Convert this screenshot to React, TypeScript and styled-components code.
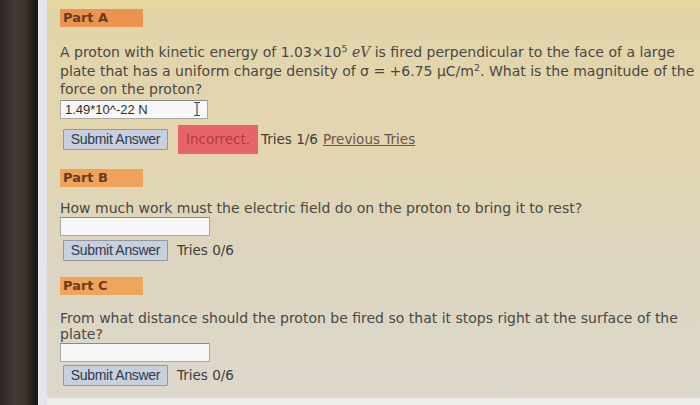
import React from 'react';
import styled, { createGlobalStyle } from 'styled-components';

const GlobalStyle = createGlobalStyle`
  html, body {
    margin: 0;
    padding: 0;
    width: 700px;
    height: 405px;
    overflow: hidden;
    background: #2e2725;
  }
`;

const Screen = styled.div`
  display: flex;
  width: 700px;
  height: 405px;
  overflow: hidden;
`;

const Bezel = styled.div`
  width: 33px;
  flex-shrink: 0;
  background: linear-gradient(90deg, #2b2422 0%, #463b36 45%, #3a302c 80%, #231d1c 100%);
`;

const Rim = styled.div`
  width: 14px;
  flex-shrink: 0;
  background: linear-gradient(90deg, #1c1818 0, #1c1818 5px, #e9e7ee 5px, #e4e2e8 100%);
`;

const Page = styled.div`
  flex: 1;
  display: flex;
  flex-direction: column;
  background: linear-gradient(180deg, #e6d79c 0, #e6d79c 7px, #e3d5aa 8px, #e2d5b0 38%, #ddd5bf 62%, #dcd8cb 100%);
  min-width: 0;
`;

const Content = styled.div`
  flex: 1;
  padding: 9px 0 0 13px;
  white-space: nowrap;
  overflow: hidden;
`;

const BottomStrip = styled.div`
  height: 7px;
  flex-shrink: 0;
  background: #eeedea;
`;

const Section = styled.div<{ $gap: number }>`
  display: flex;
  flex-direction: column;
  align-items: flex-start;
  margin-top: ${p => p.$gap}px;
`;

const PartLabel = styled.div<{ $tone: string }>`
  width: 80px;
  height: 18px;
  padding-left: 3px;
  background: ${p => p.$tone};
  color: #6a3b1f;
  font-family: "DejaVu Sans", Verdana, sans-serif;
  font-weight: bold;
  font-size: 13px;
  line-height: 18px;
`;

const Question = styled.p<{ $gap: number; $lh: number }>`
  margin: ${p => p.$gap}px 0 0 0;
  font-family: "DejaVu Sans", Verdana, sans-serif;
  font-size: 14px;
  line-height: ${p => p.$lh}px;
  color: #4a4846;
  white-space: nowrap;
`;

const Sup = styled.sup`
  font-size: 9.5px;
  line-height: 0;
  vertical-align: 5px;
`;

const Var = styled.span`
  font-family: "DejaVu Serif", "Liberation Serif", serif;
  font-style: italic;
`;

const InputWrap = styled.div<{ $gap: number }>`
  position: relative;
  margin-top: ${p => p.$gap}px;
`;

const AnswerBox = styled.div<{ $w: number }>`
  box-sizing: border-box;
  width: ${p => p.$w}px;
  height: 19px;
  background: #f7f7f8;
  border: 1px solid #a9a7a4;
  border-top-color: #8d8b89;
  font-family: "Liberation Sans", Arial, sans-serif;
  font-size: 13px;
  line-height: 17px;
  padding-left: 4px;
  color: #2f2f33;
`;

const Caret = styled.svg`
  position: absolute;
  left: 133px;
  top: 1px;
`;

const ActionRow = styled.div<{ $gap: number; $h: number }>`
  display: flex;
  align-items: center;
  height: ${p => p.$h}px;
  margin-top: ${p => p.$gap}px;
`;

const SubmitButton = styled.button`
  box-sizing: border-box;
  width: 105px;
  height: 21px;
  margin-left: 3px;
  padding: 0;
  background: #c7d0dc;
  border: 1px solid #8f98a4;
  border-radius: 1px;
  font-family: "Liberation Sans", Arial, sans-serif;
  font-size: 14px;
  color: #2e3a52;
  letter-spacing: -0.3px;
`;

const Verdict = styled.div`
  width: 80px;
  height: 29px;
  margin-left: 10px;
  background: #e8646b;
  color: #b03b45;
  font-family: "DejaVu Sans", Verdana, sans-serif;
  font-size: 13.5px;
  line-height: 29px;
  text-align: center;
`;

const Tries = styled.span<{ $gap: number }>`
  margin-left: ${p => p.$gap}px;
  font-family: "DejaVu Sans", Verdana, sans-serif;
  font-size: 13.5px;
  color: #3f3d3b;
`;

const PrevLink = styled.a`
  margin-left: 5px;
  font-family: "DejaVu Sans", Verdana, sans-serif;
  font-size: 13.5px;
  color: #6a564c;
  text-decoration: underline;
`;

export default function App() {
  return (
    <>
      <GlobalStyle />
      <Screen>
        <Bezel />
        <Rim />
        <Page>
          <Content>
            <Section $gap={0}>
              <PartLabel $tone="#ea9450">Part A</PartLabel>
              <Question $gap={16} $lh={18.5}>
                A proton with kinetic energy of 1.03×10<Sup>5</Sup> <Var>eV</Var> is fired perpendicular to the face of a large
                <br />
                plate that has a uniform charge density of σ = +6.75 μC/m<Sup>2</Sup>. What is the magnitude of the
                <br />
                force on the proton?
              </Question>
              <InputWrap $gap={1}>
                <AnswerBox $w={148}>1.49*10^-22 N</AnswerBox>
                <Caret width="8" height="16" viewBox="0 0 8 16">
                  <path d="M1 1.5h6M4 1.5v13M1 14.5h6" stroke="#4a4a52" strokeWidth="1.2" fill="none" />
                </Caret>
              </InputWrap>
              <ActionRow $gap={6} $h={29}>
                <SubmitButton>Submit Answer</SubmitButton>
                <Verdict>Incorrect.</Verdict>
                <Tries $gap={3}>Tries 1/6</Tries>
                <PrevLink>Previous Tries</PrevLink>
              </ActionRow>
            </Section>

            <Section $gap={15}>
              <PartLabel $tone="#eea25a">Part B</PartLabel>
              <Question $gap={12} $lh={18}>
                How much work must the electric field do on the proton to bring it to rest?
              </Question>
              <InputWrap $gap={0}>
                <AnswerBox $w={150} />
              </InputWrap>
              <ActionRow $gap={4} $h={21}>
                <SubmitButton>Submit Answer</SubmitButton>
                <Tries $gap={9}>Tries 0/6</Tries>
              </ActionRow>
            </Section>

            <Section $gap={16}>
              <PartLabel $tone="#f0a55a">Part C</PartLabel>
              <Question $gap={15} $lh={16.5}>
                From what distance should the proton be fired so that it stops right at the surface of the
                <br />
                plate?
              </Question>
              <InputWrap $gap={0}>
                <AnswerBox $w={150} />
              </InputWrap>
              <ActionRow $gap={3} $h={21}>
                <SubmitButton>Submit Answer</SubmitButton>
                <Tries $gap={9}>Tries 0/6</Tries>
              </ActionRow>
            </Section>
          </Content>
          <BottomStrip />
        </Page>
      </Screen>
    </>
  );
}
